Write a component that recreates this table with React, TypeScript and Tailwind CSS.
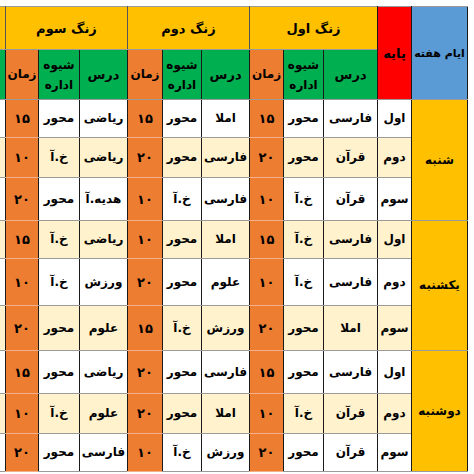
import React from "react";

type Lesson = [string, string, string];

interface Row {
  grade: string;
  bells: Lesson[];
}

interface Day {
  name: string;
  rows: Row[];
}

const days: Day[] = [
  {
    name: "شنبه",
    rows: [
      { grade: "اول", bells: [["فارسی", "محور", "۱۵"], ["املا", "محور", "۱۵"], ["ریاضی", "محور", "۱۵"]] },
      { grade: "دوم", bells: [["قرآن", "محور", "۲۰"], ["فارسی", "محور", "۲۰"], ["ریاضی", "خ.آ", "۱۰"]] },
      { grade: "سوم", bells: [["قرآن", "خ.آ", "۱۰"], ["فارسی", "خ.آ", "۱۰"], ["هدیه.آ", "محور", "۲۰"]] },
    ],
  },
  {
    name: "یکشنبه",
    rows: [
      { grade: "اول", bells: [["فارسی", "خ.آ", "۱۵"], ["املا", "محور", "۱۰"], ["ریاضی", "خ.آ", "۱۵"]] },
      { grade: "دوم", bells: [["فارسی", "خ.آ", "۱۰"], ["علوم", "محور", "۲۰"], ["ورزش", "خ.آ", "۱۰"]] },
      { grade: "سوم", bells: [["املا", "محور", "۲۰"], ["ورزش", "خ.آ", "۱۵"], ["علوم", "محور", "۲۰"]] },
    ],
  },
  {
    name: "دوشنبه",
    rows: [
      { grade: "اول", bells: [["فارسی", "محور", "۱۵"], ["فارسی", "محور", "۲۰"], ["ریاضی", "محور", "۱۵"]] },
      { grade: "دوم", bells: [["قرآن", "خ.آ", "۱۰"], ["املا", "محور", "۲۰"], ["علوم", "خ.آ", "۱۰"]] },
      { grade: "سوم", bells: [["قرآن", "محور", "۲۰"], ["ورزش", "خ.آ", "۱۰"], ["فارسی", "محور", "۲۰"]] },
    ],
  },
];

// row heights measured off the sheet, top to bottom
const rowHeights = ["h-[38px]", "h-[40px]", "h-[43px]", "h-[38px]", "h-[47px]", "h-[45px]", "h-[43px]", "h-[40px]", "h-[38px]"];

const cell = "border-x border-x-[#1a1a1a] border-y border-y-[#9a9a9a] text-center align-middle p-0";

export default function App() {
  let index = 0;

  return (
    <div
      dir="rtl"
      className="w-[474px] h-[474px] overflow-hidden bg-white pt-[6px] pr-[6px]"
      style={{ fontFamily: '"DejaVu Sans", sans-serif' }}
    >
      <table className="table-fixed border-collapse text-black font-bold text-[12px] leading-[17px] w-[502px]">
        <colgroup>
          <col className="w-[56px]" />
          <col className="w-[34px]" />
          <col className="w-[54px]" />
          <col className="w-[40px]" />
          <col className="w-[34px]" />
          <col className="w-[48px]" />
          <col className="w-[39px]" />
          <col className="w-[35px]" />
          <col className="w-[48px]" />
          <col className="w-[41px]" />
          <col className="w-[33px]" />
          <col className="w-[40px]" />
        </colgroup>
        <thead>
          <tr className="h-[43px]">
            <th
              rowSpan={2}
              className={`${cell} bg-[#5b9bd5] border-y-[#1a1a1a] whitespace-nowrap text-[11px] tracking-[-0.3px]`}
            >
              ایام هفته
            </th>
            <th rowSpan={2} className={`${cell} bg-[#ff0000] border-y-[#1a1a1a] text-[13px]`}>
              پایه
            </th>
            <th colSpan={3} className={`${cell} bg-[#ffc000] border-y-[#1a1a1a] border-x-[#555] text-[13px]`}>
              زنگ اول
            </th>
            <th colSpan={3} className={`${cell} bg-[#ffc000] border-y-[#1a1a1a] border-x-[#555] text-[13px]`}>
              زنگ دوم
            </th>
            <th colSpan={3} className={`${cell} bg-[#ffc000] border-y-[#1a1a1a] border-x-[#555] text-[13px]`}>
              زنگ سوم
            </th>
            <th className={`${cell} bg-[#ffc000] border-y-[#1a1a1a]`}></th>
          </tr>
          <tr className="h-[50px]">
            {[0, 1, 2].map((b) => (
              <React.Fragment key={b}>
                <th className={`${cell} bg-[#00b050] border-y-[#1a1a1a] text-[13px]`}>درس</th>
                <th className={`${cell} bg-[#00b050] border-y-[#1a1a1a] leading-[20px]`}>
                  شیوه
                  <br />
                  اداره
                </th>
                <th className={`${cell} bg-[#ed7d31] border-y-[#1a1a1a]`}>زمان</th>
              </React.Fragment>
            ))}
            <th className={`${cell} bg-[#00b050] border-y-[#1a1a1a]`}></th>
          </tr>
        </thead>
        <tbody>
          {days.map((day) =>
            day.rows.map((row, r) => {
              const i = index++;
              const bg = i % 2 === 1 ? "bg-[#fff2cc]" : "bg-white";
              return (
                <tr key={day.name + r} className={rowHeights[i]}>
                  {r === 0 && (
                    <td rowSpan={3} className={`${cell} bg-[#ffc000] border-y-[#1a1a1a]`}>
                      {day.name}
                    </td>
                  )}
                  <td className={`${cell} ${bg}`}>{row.grade}</td>
                  {row.bells.map(([lesson, method, time], b) => (
                    <React.Fragment key={b}>
                      <td className={`${cell} ${bg}`}>{lesson}</td>
                      <td className={`${cell} ${bg}`}>{method}</td>
                      <td className={`${cell} bg-[#ed7d31] border-y-[#f3b08a] text-[13px]`}>{time}</td>
                    </React.Fragment>
                  ))}
                  <td className={`${cell} ${bg}`}></td>
                </tr>
              );
            })
          )}
        </tbody>
      </table>
    </div>
  );
}
